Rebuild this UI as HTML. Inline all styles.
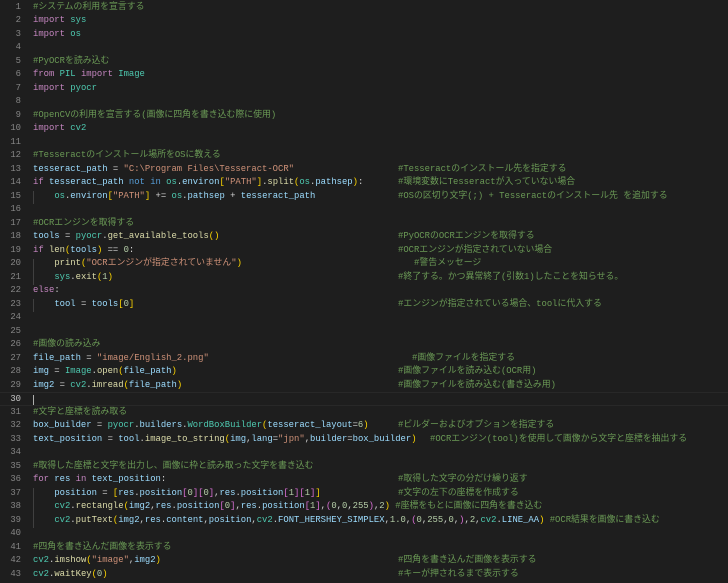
<!DOCTYPE html>
<html><head><meta charset="utf-8"><style>
html,body{margin:0;padding:0;background:#1e1e1e;width:728px;height:583px;overflow:hidden}
#ed{position:relative;top:1.5px;width:728px;height:583px;font-family:"Liberation Mono","Noto Sans CJK JP",monospace;font-size:8.9px;color:#d4d4d4}
.l{position:absolute;left:0;height:13.5px;line-height:13.5px;white-space:pre;width:728px}
.n{position:absolute;left:0;width:21px;text-align:right;color:#858585}
.c0{position:absolute;left:33px}
.cm{position:absolute;color:#6a9955}
.k{color:#c586c0}.t{color:#4ec9b0}.v{color:#9cdcfe}.f{color:#dcdcaa}.s{color:#ce9178}.d{color:#b5cea8}.g{color:#6a9955}.b{color:#ffd700}.p{color:#da70d6}.bl{color:#569cd6}
.cur{border-top:1px solid #282828;border-bottom:1px solid #282828;box-sizing:border-box}
.guide{position:absolute;left:33px;width:1px;background:#404040}
</style></head><body><div id="ed">
<div class="guide" style="top:189px;height:13px"></div>
<div class="guide" style="top:257px;height:26px"></div>
<div class="guide" style="top:297px;height:13px"></div>
<div class="guide" style="top:486px;height:40px"></div>
<div class="l" style="top:-1px"><span class="n">1</span><span class="c0 g">#システムの利用を宣言する</span></div>
<div class="l" style="top:12.5px"><span class="n">2</span><span class="c0"><span class="k">import</span> <span class="t">sys</span></span></div>
<div class="l" style="top:26px"><span class="n">3</span><span class="c0"><span class="k">import</span> <span class="t">os</span></span></div>
<div class="l" style="top:39.5px"><span class="n">4</span></div>
<div class="l" style="top:53px"><span class="n">5</span><span class="c0 g">#PyOCRを読み込む</span></div>
<div class="l" style="top:66.5px"><span class="n">6</span><span class="c0"><span class="k">from</span> <span class="t">PIL</span> <span class="k">import</span> <span class="t">Image</span></span></div>
<div class="l" style="top:80px"><span class="n">7</span><span class="c0"><span class="k">import</span> <span class="t">pyocr</span></span></div>
<div class="l" style="top:93.5px"><span class="n">8</span></div>
<div class="l" style="top:107px"><span class="n">9</span><span class="c0 g">#OpenCVの利用を宣言する(画像に四角を書き込む際に使用)</span></div>
<div class="l" style="top:120.5px"><span class="n">10</span><span class="c0"><span class="k">import</span> <span class="t">cv2</span></span></div>
<div class="l" style="top:134px"><span class="n">11</span></div>
<div class="l" style="top:147.5px"><span class="n">12</span><span class="c0 g">#Tesseractのインストール場所をOSに教える</span></div>
<div class="l" style="top:161px"><span class="n">13</span><span class="c0"><span class="v">tesseract_path</span> = <span class="s">"C:\Program Files\Tesseract-OCR"</span></span><span class="cm" style="left:398px">#Tesseractのインストール先を指定する</span></div>
<div class="l" style="top:174.5px"><span class="n">14</span><span class="c0"><span class="k">if</span> <span class="v">tesseract_path</span> <span class="bl">not</span> <span class="bl">in</span> <span class="t">os</span>.<span class="v">environ</span><span class="b">[</span><span class="s">"PATH"</span><span class="b">]</span>.<span class="f">split</span><span class="b">(</span><span class="t">os</span>.<span class="v">pathsep</span><span class="b">)</span>:</span><span class="cm" style="left:398px">#環境変数にTesseractが入っていない場合</span></div>
<div class="l" style="top:188px"><span class="n">15</span><span class="c0">    <span class="t">os</span>.<span class="v">environ</span><span class="b">[</span><span class="s">"PATH"</span><span class="b">]</span> += <span class="t">os</span>.<span class="v">pathsep</span> + <span class="v">tesseract_path</span></span><span class="cm" style="left:398px">#OSの区切り文字(;) + Tesseractのインストール先 を追加する</span></div>
<div class="l" style="top:201.5px"><span class="n">16</span></div>
<div class="l" style="top:215px"><span class="n">17</span><span class="c0 g">#OCRエンジンを取得する</span></div>
<div class="l" style="top:228.5px"><span class="n">18</span><span class="c0"><span class="v">tools</span> = <span class="t">pyocr</span>.<span class="f">get_available_tools</span><span class="b">()</span></span><span class="cm" style="left:398px">#PyOCRのOCRエンジンを取得する</span></div>
<div class="l" style="top:242px"><span class="n">19</span><span class="c0"><span class="k">if</span> <span class="f">len</span><span class="b">(</span><span class="v">tools</span><span class="b">)</span> == <span class="d">0</span>:</span><span class="cm" style="left:398px">#OCRエンジンが指定されていない場合</span></div>
<div class="l" style="top:255.5px"><span class="n">20</span><span class="c0">    <span class="f">print</span><span class="b">(</span><span class="s">"OCRエンジンが指定されていません"</span><span class="b">)</span></span><span class="cm" style="left:414px">#警告メッセージ</span></div>
<div class="l" style="top:269px"><span class="n">21</span><span class="c0">    <span class="t">sys</span>.<span class="f">exit</span><span class="b">(</span><span class="d">1</span><span class="b">)</span></span><span class="cm" style="left:398px">#終了する。かつ異常終了(引数1)したことを知らせる。</span></div>
<div class="l" style="top:282.5px"><span class="n">22</span><span class="c0"><span class="k">else</span>:</span></div>
<div class="l" style="top:296px"><span class="n">23</span><span class="c0">    <span class="v">tool</span> = <span class="v">tools</span><span class="b">[</span><span class="d">0</span><span class="b">]</span></span><span class="cm" style="left:398px">#エンジンが指定されている場合、toolに代入する</span></div>
<div class="l" style="top:309.5px"><span class="n">24</span></div>
<div class="l" style="top:323px"><span class="n">25</span></div>
<div class="l" style="top:336.5px"><span class="n">26</span><span class="c0 g">#画像の読み込み</span></div>
<div class="l" style="top:350px"><span class="n">27</span><span class="c0"><span class="v">file_path</span> = <span class="s">"image/English_2.png"</span></span><span class="cm" style="left:412px">#画像ファイルを指定する</span></div>
<div class="l" style="top:363.5px"><span class="n">28</span><span class="c0"><span class="v">img</span> = <span class="t">Image</span>.<span class="f">open</span><span class="b">(</span><span class="v">file_path</span><span class="b">)</span></span><span class="cm" style="left:398px">#画像ファイルを読み込む(OCR用)</span></div>
<div class="l" style="top:377px"><span class="n">29</span><span class="c0"><span class="v">img2</span> = <span class="t">cv2</span>.<span class="f">imread</span><span class="b">(</span><span class="v">file_path</span><span class="b">)</span></span><span class="cm" style="left:398px">#画像ファイルを読み込む(書き込み用)</span></div>
<div class="l cur" style="top:390.5px"><span class="n" style="color:#c6c6c6">30</span><span style="position:absolute;left:33px;top:2px;width:1px;height:10px;background:#aeafad"></span></div>
<div class="l" style="top:404px"><span class="n">31</span><span class="c0 g">#文字と座標を読み取る</span></div>
<div class="l" style="top:417.5px"><span class="n">32</span><span class="c0"><span class="v">box_builder</span> = <span class="t">pyocr</span>.<span class="v">builders</span>.<span class="t">WordBoxBuilder</span><span class="b">(</span><span class="v">tesseract_layout</span>=<span class="d">6</span><span class="b">)</span></span><span class="cm" style="left:398px">#ビルダーおよびオプションを指定する</span></div>
<div class="l" style="top:431px"><span class="n">33</span><span class="c0"><span class="v">text_position</span> = <span class="v">tool</span>.<span class="f">image_to_string</span><span class="b">(</span><span class="v">img</span>,<span class="v">lang</span>=<span class="s">"jpn"</span>,<span class="v">builder</span>=<span class="v">box_builder</span><span class="b">)</span></span><span class="cm" style="left:430px">#OCRエンジン(tool)を使用して画像から文字と座標を抽出する</span></div>
<div class="l" style="top:444.5px"><span class="n">34</span></div>
<div class="l" style="top:458px"><span class="n">35</span><span class="c0 g">#取得した座標と文字を出力し、画像に枠と読み取った文字を書き込む</span></div>
<div class="l" style="top:471.5px"><span class="n">36</span><span class="c0"><span class="k">for</span> <span class="v">res</span> <span class="k">in</span> <span class="v">text_position</span>:</span><span class="cm" style="left:398px">#取得した文字の分だけ繰り返す</span></div>
<div class="l" style="top:485px"><span class="n">37</span><span class="c0">    <span class="v">position</span> = <span class="b">[</span><span class="v">res</span>.<span class="v">position</span><span class="p">[</span><span class="d">0</span><span class="p">]</span><span class="p">[</span><span class="d">0</span><span class="p">]</span>,<span class="v">res</span>.<span class="v">position</span><span class="p">[</span><span class="d">1</span><span class="p">]</span><span class="p">[</span><span class="d">1</span><span class="p">]</span><span class="b">]</span></span><span class="cm" style="left:398px">#文字の左下の座標を作成する</span></div>
<div class="l" style="top:498.5px"><span class="n">38</span><span class="c0">    <span class="t">cv2</span>.<span class="f">rectangle</span><span class="b">(</span><span class="v">img2</span>,<span class="v">res</span>.<span class="v">position</span><span class="p">[</span><span class="d">0</span><span class="p">]</span>,<span class="v">res</span>.<span class="v">position</span><span class="p">[</span><span class="d">1</span><span class="p">]</span>,<span class="p">(</span><span class="d">0</span>,<span class="d">0</span>,<span class="d">255</span><span class="p">)</span>,<span class="d">2</span><span class="b">)</span> <span class="g">#座標をもとに画像に四角を書き込む</span></span></div>
<div class="l" style="top:512px"><span class="n">39</span><span class="c0">    <span class="t">cv2</span>.<span class="f">putText</span><span class="b">(</span><span class="v">img2</span>,<span class="v">res</span>.<span class="v">content</span>,<span class="v">position</span>,<span class="t">cv2</span>.<span class="v">FONT_HERSHEY_SIMPLEX</span>,<span class="d">1.0</span>,<span class="p">(</span><span class="d">0</span>,<span class="d">255</span>,<span class="d">0</span>,<span class="p">)</span>,<span class="d">2</span>,<span class="t">cv2</span>.<span class="v">LINE_AA</span><span class="b">)</span> <span class="g">#OCR結果を画像に書き込む</span></span></div>
<div class="l" style="top:525.5px"><span class="n">40</span></div>
<div class="l" style="top:539px"><span class="n">41</span><span class="c0 g">#四角を書き込んだ画像を表示する</span></div>
<div class="l" style="top:552.5px"><span class="n">42</span><span class="c0"><span class="t">cv2</span>.<span class="f">imshow</span><span class="b">(</span><span class="s">"image"</span>,<span class="v">img2</span><span class="b">)</span></span><span class="cm" style="left:398px">#四角を書き込んだ画像を表示する</span></div>
<div class="l" style="top:566px"><span class="n">43</span><span class="c0"><span class="t">cv2</span>.<span class="f">waitKey</span><span class="b">(</span><span class="d">0</span><span class="b">)</span></span><span class="cm" style="left:398px">#キーが押されるまで表示する</span></div>
</div></body></html>
